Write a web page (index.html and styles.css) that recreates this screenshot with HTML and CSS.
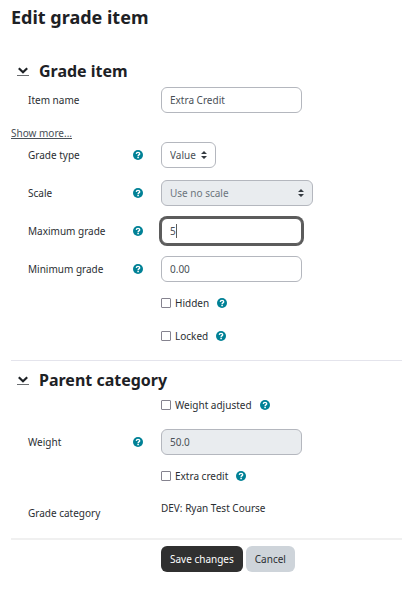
FILE: index.html
```html
<!DOCTYPE html>
<html lang="en">
<head>
<meta charset="utf-8">
<meta name="viewport" content="width=device-width, initial-scale=1">
<title>Edit grade item</title>
<link rel="stylesheet" href="styles.css">
</head>
<body>
<svg class="sprite" aria-hidden="true">
  <symbol id="help" viewBox="0 0 20 20">
    <circle cx="10" cy="10" r="10" fill="#008196"/>
    <path d="M6.600 7.800C6.800 5.600 8.200 4.700 10 4.700c2 0 3.400 1.100 3.400 2.800 0 2.400-3.100 2.300-3.100 4.300" fill="none" stroke="#fff" stroke-width="2.800"/>
    <circle cx="10.2" cy="14.8" r="1.7" fill="#fff"/>
  </symbol>
  <symbol id="chevron" viewBox="0 0 12 8">
    <path d="M1.800 1.200L6 5.200l4.200-4" fill="none" stroke="#1d2125" stroke-width="2.200"/>
  </symbol>
</svg>
<main class="page">
  <h1 class="title">Edit grade item</h1>
  <form>
    <section class="section">
      <div class="section-head">
        <a class="toggle" href="#grade-item" aria-label="Collapse Grade item"><svg><use href="#chevron"/></svg></a>
        <h2 id="grade-item">Grade item</h2>
      </div>
      <div class="row">
        <label for="name">Item name</label>
        <div class="field"><input class="text" id="name" type="text" value="Extra Credit"></div>
      </div>
      <a class="more" href="#more">Show more...</a>
      <div class="row">
        <label for="type">Grade type</label>
        <button class="help" type="button" aria-label="Help with Grade type"><svg><use href="#help"/></svg></button>
        <div class="field"><select class="select" id="type"><option>Value</option></select></div>
      </div>
      <div class="row">
        <label for="scale">Scale</label>
        <button class="help" type="button" aria-label="Help with Scale"><svg><use href="#help"/></svg></button>
        <div class="field"><select class="select select-wide" id="scale" disabled><option>Use no scale</option></select></div>
      </div>
      <div class="row">
        <label for="max">Maximum grade</label>
        <button class="help" type="button" aria-label="Help with Maximum grade"><svg><use href="#help"/></svg></button>
        <div class="field editing"><input class="text" id="max" type="text" value="5"></div>
      </div>
      <div class="row">
        <label for="min">Minimum grade</label>
        <button class="help" type="button" aria-label="Help with Minimum grade"><svg><use href="#help"/></svg></button>
        <div class="field"><input class="text" id="min" type="text" value="0.00"></div>
      </div>
      <div class="row row-check">
        <div class="field check">
          <input id="hidden" type="checkbox"><label for="hidden">Hidden</label>
          <button class="help" type="button" aria-label="Help with Hidden"><svg><use href="#help"/></svg></button>
        </div>
      </div>
      <div class="row row-check">
        <div class="field check">
          <input id="locked" type="checkbox"><label for="locked">Locked</label>
          <button class="help" type="button" aria-label="Help with Locked"><svg><use href="#help"/></svg></button>
        </div>
      </div>
    </section>
    <section class="section section-ruled">
      <div class="section-head">
        <a class="toggle" href="#parent-category" aria-label="Collapse Parent category"><svg><use href="#chevron"/></svg></a>
        <h2 id="parent-category">Parent category</h2>
      </div>
      <div class="row row-check">
        <div class="field check">
          <input id="adjusted" type="checkbox"><label for="adjusted">Weight adjusted</label>
          <button class="help" type="button" aria-label="Help with Weight adjusted"><svg><use href="#help"/></svg></button>
        </div>
      </div>
      <div class="row">
        <label for="weight">Weight</label>
        <button class="help" type="button" aria-label="Help with Weight"><svg><use href="#help"/></svg></button>
        <div class="field"><input class="text" id="weight" type="text" value="50.0" disabled></div>
      </div>
      <div class="row row-check">
        <div class="field check">
          <input id="extra" type="checkbox"><label for="extra">Extra credit</label>
          <button class="help" type="button" aria-label="Help with Extra credit"><svg><use href="#help"/></svg></button>
        </div>
      </div>
      <div class="row">
        <span>Grade category</span>
        <div class="field field-static">DEV: Ryan Test Course</div>
      </div>
    </section>
    <div class="actions">
      <div class="field buttons">
        <button class="btn btn-primary" type="submit">Save changes</button>
        <button class="btn" type="button">Cancel</button>
      </div>
    </div>
  </form>
</main>
</body>
</html>
```

FILE: styles.css
```css
* {
  box-sizing: border-box;
}

body {
  margin: 0;
  background: #fff;
  color: #2a2e32;
  font-family: "Noto Sans", "Open Sans", sans-serif;
  font-size: 10px;
  line-height: 16px;
}

.sprite {
  display: none;
}

.page {
  padding: 5px 0 24px 11px;
}

.title {
  margin: 0 0 26px;
  color: #1d2125;
  font-size: 18px;
  line-height: 24px;
}

.section-ruled {
  border-top: 1px solid #e4e4ec;
  padding-top: 3px;
}

.section-head {
  display: flex;
  align-items: center;
  gap: 10px;
  height: 32px;
  padding-left: 6px;
}

.section-head h2 {
  margin: 0;
  color: #1d2125;
  font-size: 16px;
  line-height: 24px;
}

.toggle {
  width: 12px;
  height: 9px;
  border-bottom: 1px solid #6a6d70;
}

.toggle svg {
  display: block;
  width: 12px;
  height: 8px;
}

.row,
.actions {
  display: grid;
  grid-template-columns: 105px 10px minmax(0, 1fr);
  align-items: center;
  padding-left: 17px;
}

.row {
  min-height: 26px;
  margin-bottom: 12px;
}

.row-check {
  min-height: 17px;
  margin-bottom: 16px;
}

.field {
  grid-column: 3;
  margin-left: 18px;
}

.field-static {
  align-self: start;
}

.more {
  display: table;
  margin-bottom: 1px;
  color: #495057;
}

.help {
  display: block;
  width: 10px;
  height: 10px;
  padding: 0;
  border: 0;
  background: none;
}

.help svg {
  display: block;
  width: 10px;
  height: 10px;
}

.text,
.select {
  display: block;
  height: 26px;
  max-width: 100%;
  padding: 0 8px;
  border: 1px solid #b4b7be;
  border-radius: 6px;
  background-color: #fff;
  color: #495057;
  font: inherit;
}

.text {
  width: 141px;
}

.select {
  appearance: none;
  width: 55px;
  background-image: url("data:image/svg+xml,%3Csvg xmlns='http://www.w3.org/2000/svg' viewBox='0 0 6 8'%3E%3Cpath fill='%23343a40' d='M3 0L0 3h6zM3 8L0 5h6z'/%3E%3C/svg%3E");
  background-position: right 8px center;
  background-repeat: no-repeat;
  background-size: 6px 8px;
}

.select-wide {
  width: 152px;
}

.text:disabled,
.select:disabled {
  background-color: #e9ecef;
  opacity: 1;
}

.select:disabled {
  color: #6c757d;
}

.editing {
  position: relative;
}

.editing .text {
  border-color: #5c5c5c;
  box-shadow: 0 0 0 2px #5c5c5c;
}

.editing::after {
  content: "";
  position: absolute;
  top: 6px;
  left: 15px;
  width: 1px;
  height: 14px;
  background: #5c5c5c;
}

.check {
  display: flex;
  align-items: center;
}

.check input {
  appearance: none;
  width: 10px;
  height: 10px;
  margin: 0 4px 0 0;
  border: 1px solid #85838f;
  border-radius: 1px;
  background: #fff;
}

.check .help {
  margin-left: 8px;
}

.actions {
  border-top: 2px solid #f0f0f0;
  padding-top: 6px;
}

.buttons {
  display: flex;
  gap: 3px;
}

.btn {
  height: 26px;
  padding: 0 9px;
  border: 0;
  border-radius: 6px;
  background: #ced4da;
  color: #2a2e32;
  font: inherit;
}

.btn-primary {
  background: #303030;
  color: #fff;
}
```
